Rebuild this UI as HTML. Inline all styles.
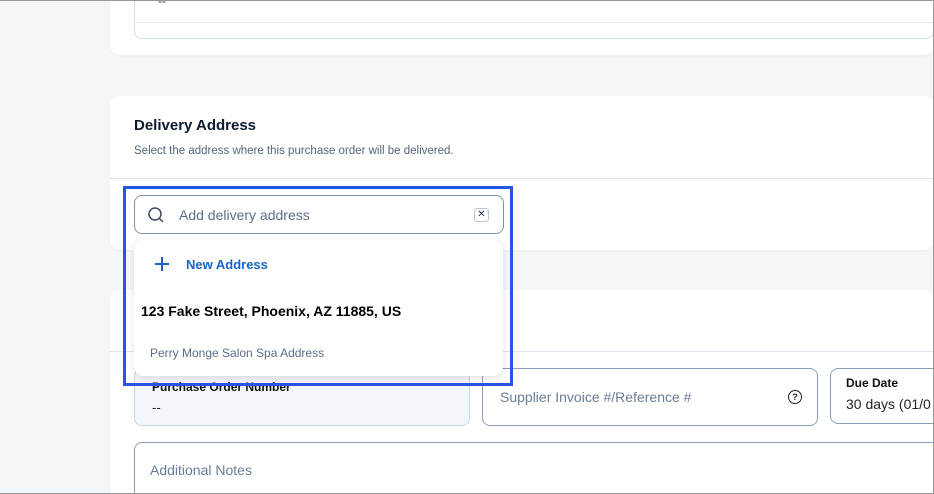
<!DOCTYPE html>
<html style="width:934px;height:494px;overflow:hidden"><head><style>
*{box-sizing:border-box;margin:0;padding:0}
body{width:934px;height:494px;overflow:hidden;background:#f4f7fa;font-family:"Liberation Sans",sans-serif;position:relative}
.abs{position:absolute}
.card{position:absolute;background:#fff;border-radius:10px;left:110px;width:824px;box-shadow:0 1px 2px rgba(0,0,0,.05)}
</style></head><body>
<div class="card" style="top:-10px;height:65px;"></div>
<div class="abs" style="left:134px;top:-10px;width:800px;height:49px;border:1px solid #d3dde8;border-radius:8px;"></div>
<div class="abs" style="left:134px;top:22px;width:800px;height:1px;background:#e3e9f0"></div>
<div class="abs" style="left:158px;top:-6px;font-size:12px;color:#333">--</div>

<div class="card" style="top:96px;height:154px;"></div>
<div class="abs" style="left:134px;top:117px;font-size:15px;font-weight:bold;color:#0d1b2e">Delivery Address</div>
<div class="abs" style="left:134px;top:145px;font-size:11.5px;color:#55657a">Select the address where this purchase order will be delivered.</div>
<div class="abs" style="left:110px;top:178px;width:824px;height:1px;background:#dfe6ee"></div>

<div class="card" style="top:290px;height:204px;border-radius:10px 10px 0 0"></div>
<div class="abs" style="left:110px;top:351px;width:824px;height:1px;background:#dfe6ee"></div>
<div class="abs" style="left:134px;top:368px;width:336px;height:58px;background:#f3f6fa;border:1px solid #c9d6e4;border-radius:8px"></div>
<div class="abs" style="left:152px;top:380px;font-size:12px;font-weight:bold;color:#111">Purchase Order Number</div>
<div class="abs" style="left:152px;top:400px;font-size:13px;color:#222">--</div>
<div class="abs" style="left:482px;top:368px;width:336px;height:58px;border:1px solid #8aa0bd;border-radius:8px"></div>
<div class="abs" style="left:500px;top:389px;font-size:14px;color:#6a7e98">Supplier Invoice #/Reference #</div>
<div class="abs" style="left:788px;top:390px;width:14px;height:14px;border:1.3px solid #222;border-radius:50%;font-size:9px;text-align:center;line-height:12px;color:#222;font-weight:bold">?</div>
<div class="abs" style="left:830px;top:368px;width:120px;height:56px;border:1px solid #8aa0bd;border-radius:8px"></div>
<div class="abs" style="left:846px;top:376px;font-size:12px;font-weight:bold;color:#111">Due Date</div>
<div class="abs" style="left:846px;top:396px;font-size:14px;color:#222;white-space:nowrap">30 days (01/0</div>
<div class="abs" style="left:134px;top:442px;width:820px;height:70px;border:1px solid #8aa0bd;border-radius:8px"></div>
<div class="abs" style="left:150px;top:462px;font-size:14px;color:#6a7e98">Additional Notes</div>

<div class="abs" style="left:134px;top:195px;width:370px;height:39px;background:#fff;border:1px solid #7c93b3;border-radius:8px"></div>
<svg class="abs" style="left:147px;top:206px" width="18" height="18" viewBox="0 0 18 18"><circle cx="8" cy="8" r="6" fill="none" stroke="#3b4c63" stroke-width="1.5"/><path d="M12.5 12.5L16 16" stroke="#3b4c63" stroke-width="1.5"/></svg>
<div class="abs" style="left:179px;top:207px;font-size:14px;color:#5b6e88">Add delivery address</div>
<div class="abs" style="left:474px;top:208px;width:15px;height:14px;border:1px solid #b7c4d4;border-radius:3px;font-size:10px;text-align:center;line-height:12px;color:#334">✕</div>

<div class="abs" style="left:134px;top:240px;width:369px;height:136px;background:#fff;border-radius:10px;box-shadow:0 2px 8px rgba(0,0,0,.12)"></div>
<svg class="abs" style="left:154px;top:256px" width="16" height="16"><path d="M8 1V15M1 8H15" stroke="#1565c8" stroke-width="2"/></svg>
<div class="abs" style="left:186px;top:257px;font-size:13px;font-weight:bold;color:#1565c8">New Address</div>
<div class="abs" style="left:141px;top:303px;font-size:14px;font-weight:bold;color:#000">123 Fake Street, Phoenix, AZ 11885, US</div>
<div class="abs" style="left:150px;top:346px;font-size:12px;color:#5b6e88">Perry Monge Salon Spa Address</div>

<div class="abs" style="left:123px;top:186px;width:390px;height:200px;border:3px solid #2756e6"></div>

<div class="abs" style="left:0;top:0;width:934px;height:1px;background:#999"></div>
<div class="abs" style="left:933px;top:0;width:1px;height:494px;background:#999"></div>
<div class="abs" style="left:0;top:493px;width:934px;height:1px;background:#999"></div>
</body></html>
